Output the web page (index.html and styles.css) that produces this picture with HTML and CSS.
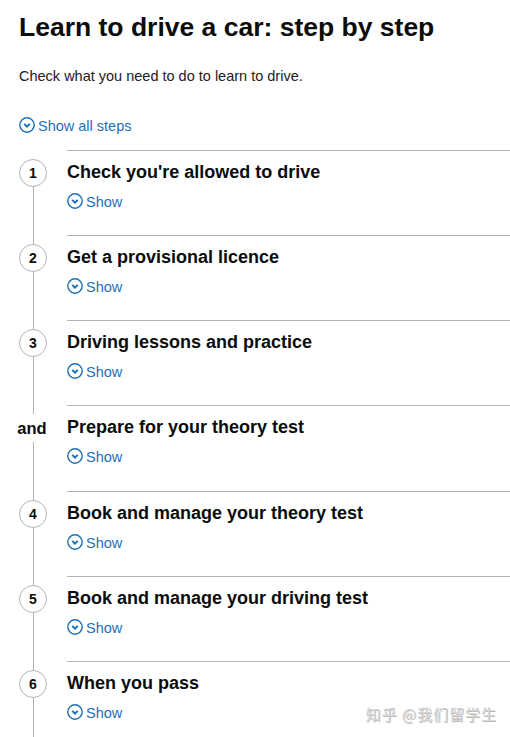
FILE: index.html
```html
<!DOCTYPE html>
<html lang="en">
<head>
    <meta charset="UTF-8">
    <meta name="viewport" content="width=device-width, initial-scale=1.0">
    <title>Learn to drive a car: step by step</title>
    <link rel="stylesheet" href="styles.css">
</head>
<body>
    <main class="page">
        <h1 class="title">Learn to drive a car: step by step</h1>
        <p class="lead">Check what you need to do to learn to drive.</p>

        <div class="controls">
            <button class="toggle">
                <svg class="chevron" viewBox="0 0 16 16" aria-hidden="true"><circle cx="8" cy="8" r="7.2"/><path d="M5.2 6.9 8 9.7 10.8 6.9"/></svg>
                Show all steps
            </button>
        </div>

        <ol class="steps">
            <li class="step step-first">
                <span class="marker"><span class="number">1</span></span>
                <div class="step-body">
                    <h2 class="step-title">Check you're allowed to drive</h2>
                    <button class="toggle">
                        <svg class="chevron" viewBox="0 0 16 16" aria-hidden="true"><circle cx="8" cy="8" r="7.2"/><path d="M5.2 6.9 8 9.7 10.8 6.9"/></svg>
                        Show
                    </button>
                </div>
            </li>
            <li class="step">
                <span class="marker"><span class="number">2</span></span>
                <div class="step-body">
                    <h2 class="step-title">Get a provisional licence</h2>
                    <button class="toggle">
                        <svg class="chevron" viewBox="0 0 16 16" aria-hidden="true"><circle cx="8" cy="8" r="7.2"/><path d="M5.2 6.9 8 9.7 10.8 6.9"/></svg>
                        Show
                    </button>
                </div>
            </li>
            <li class="step">
                <span class="marker"><span class="number">3</span></span>
                <div class="step-body">
                    <h2 class="step-title">Driving lessons and practice</h2>
                    <button class="toggle">
                        <svg class="chevron" viewBox="0 0 16 16" aria-hidden="true"><circle cx="8" cy="8" r="7.2"/><path d="M5.2 6.9 8 9.7 10.8 6.9"/></svg>
                        Show
                    </button>
                </div>
            </li>
            <li class="step">
                <span class="marker"><span class="and">and</span></span>
                <div class="step-body">
                    <h2 class="step-title">Prepare for your theory test</h2>
                    <button class="toggle">
                        <svg class="chevron" viewBox="0 0 16 16" aria-hidden="true"><circle cx="8" cy="8" r="7.2"/><path d="M5.2 6.9 8 9.7 10.8 6.9"/></svg>
                        Show
                    </button>
                </div>
            </li>
            <li class="step">
                <span class="marker"><span class="number">4</span></span>
                <div class="step-body">
                    <h2 class="step-title">Book and manage your theory test</h2>
                    <button class="toggle">
                        <svg class="chevron" viewBox="0 0 16 16" aria-hidden="true"><circle cx="8" cy="8" r="7.2"/><path d="M5.2 6.9 8 9.7 10.8 6.9"/></svg>
                        Show
                    </button>
                </div>
            </li>
            <li class="step">
                <span class="marker"><span class="number">5</span></span>
                <div class="step-body">
                    <h2 class="step-title">Book and manage your driving test</h2>
                    <button class="toggle">
                        <svg class="chevron" viewBox="0 0 16 16" aria-hidden="true"><circle cx="8" cy="8" r="7.2"/><path d="M5.2 6.9 8 9.7 10.8 6.9"/></svg>
                        Show
                    </button>
                </div>
            </li>
            <li class="step">
                <span class="marker"><span class="number">6</span></span>
                <div class="step-body">
                    <h2 class="step-title">When you pass</h2>
                    <button class="toggle">
                        <svg class="chevron" viewBox="0 0 16 16" aria-hidden="true"><circle cx="8" cy="8" r="7.2"/><path d="M5.2 6.9 8 9.7 10.8 6.9"/></svg>
                        Show
                    </button>
                </div>
            </li>
        </ol>

        <div class="watermark">知乎 @我们留学生</div>
    </main>
</body>
</html>
```

FILE: styles.css
```css
html {
    overflow: hidden;
}
body {
    margin: 0;
    font-family: "Liberation Sans", Arial, sans-serif;
    color: #0b0c0c;
    background: #fff;
}
.page {
    position: relative;
    padding: 11px 0 0 19px;
    min-height: 737px;
}
.title {
    margin: 0;
    font-size: 26.5px;
    line-height: 32px;
    font-weight: bold;
}
.lead {
    margin: 23px 0 0;
    font-size: 14.5px;
    line-height: 20px;
    color: #1f2021;
}
.controls {
    margin-top: 30px;
    margin-bottom: 14px;
}
.toggle {
    display: flex;
    align-items: center;
    gap: 3px;
    padding: 0;
    border: none;
    background: none;
    font-family: inherit;
    font-size: 14.5px;
    line-height: 20px;
    color: #1d70b8;
    cursor: pointer;
}
.chevron {
    width: 16px;
    height: 16px;
    margin-top: -2px;
    fill: none;
    stroke: #1d70b8;
}
.chevron circle {
    stroke-width: 1.4;
}
.chevron path {
    stroke-width: 2;
}
.steps {
    list-style: none;
    margin: 0;
    padding: 0;
}
.step {
    position: relative;
    display: grid;
    grid-template-columns: 48px 1fr;
}
/* vertical line down the left side */
.step::before {
    content: "";
    position: absolute;
    left: 14px;
    top: 0;
    bottom: 0;
    width: 1px;
    background: #b1b4b6;
}
.step-first::before {
    top: 23px;
}
.marker {
    position: relative;
    z-index: 1;
    display: flex;
    align-items: flex-start;
    justify-content: center;
    width: 28px;
    padding-top: 9px;
}
.number {
    display: flex;
    align-items: center;
    justify-content: center;
    width: 26px;
    height: 26px;
    border: 1px solid #b1b4b6;
    border-radius: 50%;
    background: #fff;
    font-size: 14px;
    font-weight: bold;
}
.and {
    padding: 3px 0;
    margin-left: -2px;
    background: #fff;
    font-size: 16.5px;
    line-height: 22px;
    font-weight: bold;
}
.step-body {
    border-top: 1px solid #b1b4b6;
    padding: 9px 0 23.17px;
}
.step-title {
    margin: 0 0 8px;
    font-size: 18px;
    line-height: 24px;
    font-weight: bold;
}
.watermark {
    position: absolute;
    right: 13px;
    top: 704px;
    font-family: "Noto Sans CJK SC", sans-serif;
    font-size: 15px;
    line-height: 20px;
    letter-spacing: 1px;
    color: #d6d6d6;
    text-shadow: 1px 1px 0 #bdbdbd;
}
```
